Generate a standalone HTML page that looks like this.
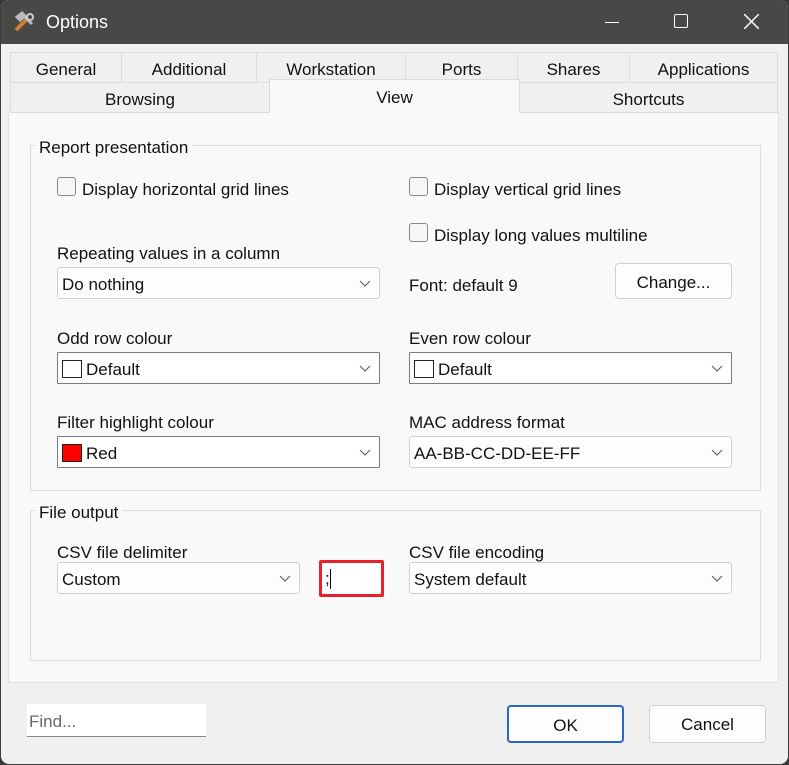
<!DOCTYPE html><html><head><style>
*{box-sizing:border-box;margin:0;padding:0}
body{width:789px;height:765px;background:#3a3a3a;font-family:"Liberation Sans",sans-serif;font-size:17px;color:#111;position:relative;overflow:hidden}
.a{position:absolute}
.win{left:1px;top:0;width:787px;height:764px;background:#f0f0f0;border-radius:8px;overflow:hidden}
.title{left:0;top:0;width:787px;height:44px;background:#4a4846;color:#fff;font-size:18px}
.tab{position:absolute;background:#f0f0f0;border:1px solid #dcdcdc;text-align:center;height:31px;line-height:33px;font-size:17px}
.cb{position:absolute;width:19px;height:19px;border:1px solid #888;border-radius:3px;background:#f6f6f6}
.cmb{position:absolute;height:32px;border:1px solid #d0d0d0;border-radius:3px;background:#fdfdfd;line-height:33px;padding-left:4px}
.cmb.d{border-color:#7a7a7a;background:#fff;border-radius:1px}
.cmb svg{position:absolute;right:8px;top:12px}
.sw{display:inline-block;width:20px;height:18px;border:1px solid #222;vertical-align:-3px;margin-right:4px}
.grp{position:absolute;border:1px solid #dcdcdc}
.btn{position:absolute;border:1px solid #d0d0d0;border-radius:4px;background:#fdfdfd;text-align:center}
.t{position:absolute;margin-top:2px}
</style></head><body>
<div class="a win">
<div class="a title">
<svg class="a" style="left:12px;top:11px" width="22" height="22" viewBox="0 0 22 22"><path d="M3 19 L13 9" stroke="#d08030" stroke-width="4"/><path d="M9 3 L19 13 M4 6 L9 2 L12 5 L7 9Z" stroke="#bbb" stroke-width="3" fill="#bbb"/><circle cx="17" cy="6" r="3" fill="none" stroke="#ccc" stroke-width="2"/></svg>
<span class="a" style="left:45px;top:12px">Options</span>
<div class="a" style="left:604px;top:22px;width:14px;height:1px;background:#fff"></div>
<div class="a" style="left:673px;top:14px;width:14px;height:14px;border:1.5px solid #fff;border-radius:2px"></div>
<svg class="a" style="left:743px;top:14px" width="15" height="15"><path d="M0 0L15 15M15 0L0 15" stroke="#fff" stroke-width="1.5"/></svg>
</div>
<div class="a" style="left:7px;top:111px;width:771px;height:572px;background:#f9f9f9;border:1px solid #e0e0e0"></div>
<div class="tab" style="left:9px;top:52px;width:112px">General</div>
<div class="tab" style="left:120px;top:52px;width:136px">Additional</div>
<div class="tab" style="left:255px;top:52px;width:150px">Workstation</div>
<div class="tab" style="left:404px;top:52px;width:113px">Ports</div>
<div class="tab" style="left:516px;top:52px;width:113px">Shares</div>
<div class="tab" style="left:628px;top:52px;width:149px">Applications</div>
<div class="tab" style="left:9px;top:82px;width:260px">Browsing</div>
<div class="tab" style="left:268px;top:79px;width:251px;height:34px;background:#f9f9f9;border-bottom:none;line-height:35px;z-index:2">View</div>
<div class="tab" style="left:518px;top:82px;width:259px">Shortcuts</div>

<div class="grp" style="left:29px;top:145px;width:731px;height:346px"></div>
<div class="t" style="left:34px;top:136px;background:#f9f9f9;padding:0 4px">Report presentation</div>
<div class="cb" style="left:56px;top:177px"></div><div class="t" style="left:81px;top:178px">Display horizontal grid lines</div>
<div class="cb" style="left:408px;top:177px"></div><div class="t" style="left:433px;top:178px">Display vertical grid lines</div>
<div class="cb" style="left:408px;top:223px"></div><div class="t" style="left:433px;top:224px">Display long values multiline</div>
<div class="t" style="left:56px;top:242px">Repeating values in a column</div>
<div class="cmb" style="left:56px;top:267px;width:323px">Do nothing<svg width="12" height="8"><path d="M1 1L6 6L11 1" stroke="#555" fill="none"/></svg></div>
<div class="t" style="left:408px;top:274px">Font: default 9</div>
<div class="btn" style="left:614px;top:263px;width:117px;height:36px;line-height:37px">Change...</div>
<div class="t" style="left:56px;top:327px">Odd row colour</div>
<div class="cmb d" style="left:56px;top:352px;width:323px"><span class="sw"></span>Default<svg width="12" height="8"><path d="M1 1L6 6L11 1" stroke="#555" fill="none"/></svg></div>
<div class="t" style="left:408px;top:327px">Even row colour</div>
<div class="cmb d" style="left:408px;top:352px;width:323px"><span class="sw"></span>Default<svg width="12" height="8"><path d="M1 1L6 6L11 1" stroke="#555" fill="none"/></svg></div>
<div class="t" style="left:56px;top:411px">Filter highlight colour</div>
<div class="cmb d" style="left:56px;top:436px;width:323px"><span class="sw" style="background:#f00"></span>Red<svg width="12" height="8"><path d="M1 1L6 6L11 1" stroke="#555" fill="none"/></svg></div>
<div class="t" style="left:408px;top:411px">MAC address format</div>
<div class="cmb" style="left:408px;top:436px;width:323px">AA-BB-CC-DD-EE-FF<svg width="12" height="8"><path d="M1 1L6 6L11 1" stroke="#555" fill="none"/></svg></div>

<div class="grp" style="left:29px;top:510px;width:731px;height:151px"></div>
<div class="t" style="left:34px;top:501px;background:#f9f9f9;padding:0 4px">File output</div>
<div class="t" style="left:56px;top:541px">CSV file delimiter</div>
<div class="cmb" style="left:56px;top:562px;width:243px">Custom<svg width="12" height="8"><path d="M1 1L6 6L11 1" stroke="#555" fill="none"/></svg></div>
<div class="a" style="left:318px;top:560px;width:65px;height:37px;border:3px solid #e8202a;border-radius:2px;background:#fff;padding:6px 0 0 3px">;<span style="display:inline-block;width:1px;height:20px;background:#000;vertical-align:-5px"></span></div>
<div class="t" style="left:408px;top:541px">CSV file encoding</div>
<div class="cmb" style="left:408px;top:562px;width:323px">System default<svg width="12" height="8"><path d="M1 1L6 6L11 1" stroke="#555" fill="none"/></svg></div>

<div class="a" style="left:26px;top:704px;width:179px;height:33px;background:#fff;border-bottom:1px solid #888;color:#666;padding:8px 2px">Find...</div>
<div class="btn" style="left:506px;top:705px;width:117px;height:38px;line-height:38px;border:2px solid #2a66c8;border-radius:4px">OK</div>
<div class="btn" style="left:648px;top:705px;width:117px;height:38px;line-height:38px">Cancel</div>
</div>
</body></html>
